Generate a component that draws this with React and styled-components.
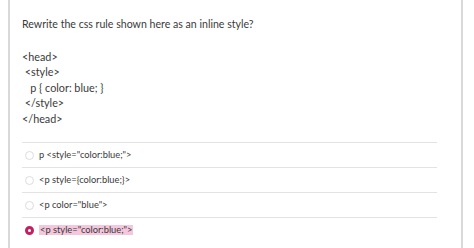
import React from "react";
import styled, { createGlobalStyle, css } from "styled-components";

const GlobalStyle = createGlobalStyle`
  body {
    margin: 0;
    background: #fff;
    font-family: Lato, "Open Sans", sans-serif;
  }
`;

const Card = styled.div`
  margin-left: 8px;
  width: 455px;
  height: 248px;
  border-left: 2px solid #d9d9d9;
  border-right: 2px solid #d9d9d9;
  padding: 17px 12px 0 12px;
  box-sizing: border-box;
`;

const Question = styled.div`
  font-size: 10.6px;
  color: #3a3a3a;
  line-height: 15.5px;
`;

const Code = styled.pre`
  margin: 16px 0 0 0;
  font-family: Lato, "Open Sans", sans-serif;
  font-size: 10.8px;
  line-height: 15.5px;
  color: #3a3a3a;
  white-space: pre;
`;

const Answers = styled.div`
  margin-top: 16px;
  margin-right: 12px;
`;

const Answer = styled.div`
  display: flex;
  align-items: center;
  height: 25px;
  border-top: 1px solid #e3e3e3;
  box-sizing: border-box;
  padding-left: 3px;
  font-size: 9.3px;
  color: #3a3a3a;
`;

const Radio = styled.span`
  width: 9px;
  height: 9px;
  border-radius: 50%;
  border: 1px solid #dcdcdc;
  box-sizing: border-box;
  margin-right: 5px;
  flex-shrink: 0;
  ${(p) =>
    p.checked &&
    css`
      border: 3px solid #c51f5d;
      background: #fff;
    `}
`;

const Label = styled.span`
  line-height: 10px;
  ${(p) =>
    p.highlight &&
    css`
      background: #f4c7dc;
      padding: 0 1px;
    `}
`;

const options = [
  { text: 'p <style="color:blue;">' },
  { text: "<p style={color:blue;}>" },
  { text: '<p color="blue">' },
  { text: '<p style="color:blue;">', checked: true },
];

export default function App() {
  return (
    <>
      <GlobalStyle />
      <Card>
        <Question>Rewrite the css rule shown here as an inline style?</Question>
        <Code>{`<head>
 <style>
   p { color: blue; }
 </style>
</head>`}</Code>
        <Answers>
          {options.map((o, i) => (
            <Answer key={i}>
              <Radio checked={o.checked} />
              <Label highlight={o.checked}>{o.text}</Label>
            </Answer>
          ))}
        </Answers>
      </Card>
    </>
  );
}
